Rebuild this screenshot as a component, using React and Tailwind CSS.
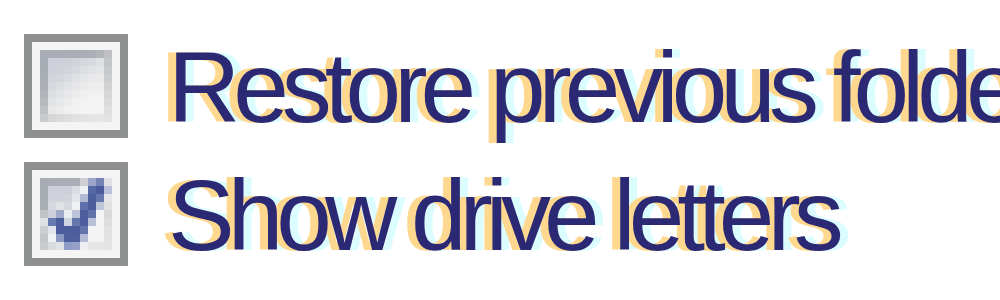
import React from 'react';

const G = '#8e8f8f';
const F = '#f4f4f4';

const uncheckedInner = [
    ['#a9adb5', '#a9adb5', '#a9aeb5', '#aaaeb5', '#aaaeb5', '#aaaeb5', '#acb0b6', '#b1b5ba', '#bfc1c4'],
    ['#a8adb5', '#cdd0d9', '#cdd0d9', '#cfd1d9', '#d1d3da', '#d5d7dc', '#d9dadf', '#dfe0e2', '#c3c5c8'],
    ['#a8adb4', '#ced1d9', '#d0d2da', '#d2d4db', '#d8d9de', '#dcdee1', '#e0e1e4', '#e4e5e6', '#c8c9cb'],
    ['#a9adb4', '#d2d4db', '#d4d6dc', '#dadbe0', '#e0e1e4', '#e4e5e7', '#e8e8ea', '#eaeaeb', '#cccdce'],
    ['#acafb5', '#d7d9de', '#dcdde1', '#e1e2e5', '#e7e7e9', '#ebebec', '#eeeeee', '#eeeeef', '#d1d1d2'],
    ['#b0b3b8', '#dcdde1', '#e2e3e5', '#e8e8ea', '#ececed', '#efefef', '#f1f1f1', '#f1f1f1', '#d6d6d7'],
    ['#b7b9bd', '#e2e3e5', '#e7e8e9', '#ececed', '#f0f0f0', '#f2f2f2', '#f3f3f3', '#f3f3f3', '#dbdbdc'],
    ['#bfc1c3', '#e8e8e9', '#ececec', '#f0f0f0', '#f2f2f2', '#f4f4f4', '#f4f4f4', '#f4f4f4', '#dfdfdf'],
    ['#cacbcc', '#d6d6d7', '#dadada', '#dedede', '#e1e1e1', '#e3e3e3', '#e5e5e5', '#e6e6e6', '#e2e2e2'],
];

const checkedInner = [
    ['#a8acb3', '#a9adb4', '#aaaeb5', '#aaaeb5', '#aaaeb5', '#cdcfd2', '#9ba5c8', '#7382b3', '#dfe1e7'],
    ['#a8acb3', '#cdd0d9', '#cdd0d9', '#cdd0d8', '#dcdde2', '#eef0f4', '#5468a6', '#495b9b', '#b9c0d8'],
    ['#a8acb3', '#cfd2da', '#cfd2da', '#d2d4db', '#e4e5ea', '#b2b9d3', '#4c5e9c', '#6677ae', '#e5e6e9'],
    ['#a9adb4', '#d5d8dd', '#e0e2e5', '#d6d8dd', '#f0f1f3', '#5f70aa', '#4b5d9b', '#c0c6da', '#e0e0e1'],
    ['#c0c2c5', '#cdd1dc', '#9faacb', '#eaecf0', '#bec4d8', '#4b5d9c', '#6273aa', '#f4f5f6', '#d8d8d9'],
    ['#e0e1e3', '#6878b0', '#4b5d9c', '#d0d5e2', '#6677ad', '#4b5d9c', '#b8bfd6', '#f5f5f5', '#dddddd'],
    ['#cdcecf', '#e2e5ec', '#4b5d9c', '#4b5d9c', '#4b5d9c', '#6374ab', '#f4f4f5', '#f3f3f3', '#e1e1e1'],
    ['#c5c6c8', '#eef0f4', '#8a98c2', '#4c5e9c', '#4e609d', '#b4bbd4', '#f3f3f3', '#f4f4f4', '#e3e3e3'],
    ['#cacbcc', '#d9dadb', '#e1e2e6', '#8f9cc5', '#94a0c7', '#eeeff2', '#e6e6e6', '#e6e6e6', '#e4e4e4'],
];

// 13x13 pixel box, 8px per pixel
function Checkbox({ inner }) {
    return (
        <svg width="104" height="104" viewBox="0 0 13 13" shapeRendering="crispEdges" className="shrink-0">
            <rect x="0" y="0" width="13" height="13" fill={G} />
            <rect x="1" y="1" width="11" height="11" fill={F} />
            {inner.map((row, r) =>
                row.map((c, i) => <rect key={`${r}-${i}`} x={i + 2} y={r + 2} width="1" height="1" fill={c} />)
            )}
        </svg>
    );
}

function Row({ inner, label }) {
    return (
        <div className="flex items-start h-[128px]">
            <div className="ml-[24px] mt-[12px]">
                <Checkbox inner={inner} />
            </div>
            <span className="ml-[40px] mt-[1px] whitespace-nowrap text-[100px] leading-[128px] tracking-[-7px] text-[#2b2874] [text-shadow:-8px_0_#ffd88f,8px_0_#dcfdff]">
                {label}
            </span>
        </div>
    );
}

export default function App() {
    return (
        <div className="w-[1000px] h-[300px] bg-white overflow-hidden pt-[22px]" style={{ fontFamily: '"Liberation Sans", Arial, sans-serif' }}>
            <Row inner={uncheckedInner} label="Restore previous folder windows at logon" />
            <Row inner={checkedInner} label="Show drive letters" />
        </div>
    );
}
